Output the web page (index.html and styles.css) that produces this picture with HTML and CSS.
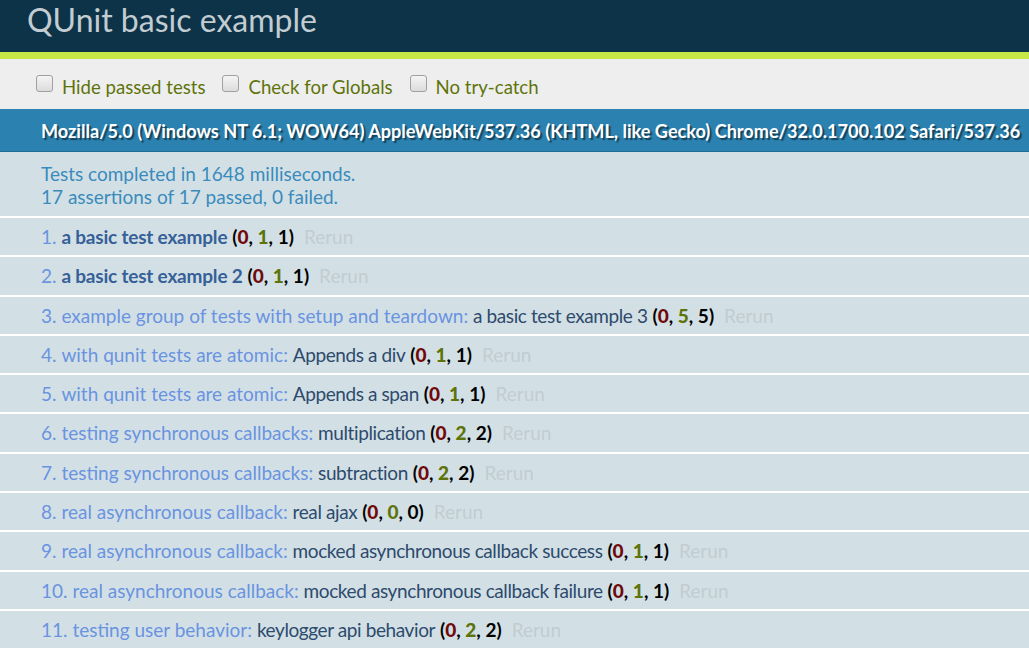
FILE: index.html
```html
<!DOCTYPE html>
<html>
<head>
  <meta charset="utf-8">
  <title>QUnit basic example</title>
  <link rel="stylesheet" href="styles.css">
</head>
<body>
  <h1 id="qunit-header"><a href="#">QUnit basic example</a></h1>
  <div id="qunit-banner"></div>
  <div id="qunit-testrunner-toolbar">
    <label><input type="checkbox"> Hide passed tests</label>
    <label><input type="checkbox"> Check for Globals</label>
    <label><input type="checkbox"> No try-catch</label>
  </div>
  <div id="qunit-userAgent">Mozilla/5.0 (Windows NT 6.1; WOW64) AppleWebKit/537.36 (KHTML, like Gecko) Chrome/32.0.1700.102 Safari/537.36</div>
  <p id="qunit-testresult">Tests completed in 1648 milliseconds.<br>17 assertions of 17 passed, 0 failed.</p>
  <ol id="qunit-tests">
    <li class="pass"><strong><span class="test-name">a basic test example</span> <b class="counts">(<b class="failed">0</b>, <b class="passed">1</b>, 1)</b></strong><a href="#">Rerun</a></li>
    <li class="pass"><strong><span class="test-name">a basic test example 2</span> <b class="counts">(<b class="failed">0</b>, <b class="passed">1</b>, 1)</b></strong><a href="#">Rerun</a></li>
    <li class="pass narrow"><strong><span class="module-name">example group of tests with setup and teardown</span>: <span class="test-name">a basic test example 3</span> <b class="counts">(<b class="failed">0</b>, <b class="passed">5</b>, 5)</b></strong><a href="#">Rerun</a></li>
    <li class="pass narrow"><strong><span class="module-name">with qunit tests are atomic</span>: <span class="test-name">Appends a div</span> <b class="counts">(<b class="failed">0</b>, <b class="passed">1</b>, 1)</b></strong><a href="#">Rerun</a></li>
    <li class="pass narrow"><strong><span class="module-name">with qunit tests are atomic</span>: <span class="test-name">Appends a span</span> <b class="counts">(<b class="failed">0</b>, <b class="passed">1</b>, 1)</b></strong><a href="#">Rerun</a></li>
    <li class="pass narrow"><strong><span class="module-name">testing synchronous callbacks</span>: <span class="test-name">multiplication</span> <b class="counts">(<b class="failed">0</b>, <b class="passed">2</b>, 2)</b></strong><a href="#">Rerun</a></li>
    <li class="pass narrow"><strong><span class="module-name">testing synchronous callbacks</span>: <span class="test-name">subtraction</span> <b class="counts">(<b class="failed">0</b>, <b class="passed">2</b>, 2)</b></strong><a href="#">Rerun</a></li>
    <li class="pass narrow"><strong><span class="module-name">real asynchronous callback</span>: <span class="test-name">real ajax</span> <b class="counts">(<b class="failed">0</b>, <b class="passed">0</b>, 0)</b></strong><a href="#">Rerun</a></li>
    <li class="pass narrow"><strong><span class="module-name">real asynchronous callback</span>: <span class="test-name">mocked asynchronous callback success</span> <b class="counts">(<b class="failed">0</b>, <b class="passed">1</b>, 1)</b></strong><a href="#">Rerun</a></li>
    <li class="pass narrow"><strong><span class="module-name">real asynchronous callback</span>: <span class="test-name">mocked asynchronous callback failure</span> <b class="counts">(<b class="failed">0</b>, <b class="passed">1</b>, 1)</b></strong><a href="#">Rerun</a></li>
    <li class="pass narrow"><strong><span class="module-name">testing user behavior</span>: <span class="test-name">keylogger api behavior</span> <b class="counts">(<b class="failed">0</b>, <b class="passed">2</b>, 2)</b></strong><a href="#">Rerun</a></li>
  </ol>
</body>
</html>
```

FILE: styles.css
```css
html {
  font-family: Lato, "Open Sans", sans-serif;
}

body {
  margin: 0;
  background-color: #fff;
}

/* header */

#qunit-header {
  margin: 0;
  height: 52px;
  padding-left: 27px;
  font-size: 32px;
  font-weight: normal;
  background-color: #0d3349;
}

#qunit-header a {
  display: inline-block;
  line-height: 31px;
  color: #c2ccd1;
  text-decoration: none;
}

#qunit-banner {
  height: 7px;
  background-color: #c6e746;
}

#qunit-testrunner-toolbar {
  display: flex;
  align-items: center;
  gap: 17px;
  height: 50px;
  box-sizing: border-box;
  padding: 6px 0 0 36px;
  font-size: 18.6px;
  color: #5e740b;
  background-color: #eee;
}

#qunit-testrunner-toolbar label {
  display: flex;
  align-items: center;
  gap: 9px;
}

#qunit-testrunner-toolbar input {
  appearance: none;
  width: 17px;
  height: 17px;
  margin: -7px 0 0 0;
  border: 1px solid #a0a0a0;
  border-radius: 3px;
  background: linear-gradient(#f4f4f4, #dcdcdc);
}

#qunit-userAgent {
  height: 42px;
  padding-left: 41px;
  line-height: 44px;
  font-size: 18.1px;
  font-weight: bold;
  color: #fff;
  background-color: #2b81af;
  text-shadow: rgba(0, 0, 0, 0.5) 2px 2px 1px;
  white-space: nowrap;
  overflow: hidden;
}

/* results */

#qunit-testresult {
  margin: 0;
  height: 67px;
  box-sizing: border-box;
  padding: 10px 0 0 41px;
  font-size: 19px;
  line-height: 23px;
  color: #3a8bbb;
  background-color: #d2e0e6;
  border-top: 1px solid #1f6d96;
  border-bottom: 2px solid #fff;
}

#qunit-tests {
  margin: 0;
  padding: 0;
  list-style-position: inside;
  font-size: 19px;
}

#qunit-tests li {
  height: 39.3px;
  box-sizing: border-box;
  padding-left: 41px;
  line-height: 37px;
  color: #6a93e0;
  background-color: #d2e0e6;
  border-bottom: 2px solid #fff;
  white-space: nowrap;
}

#qunit-tests strong {
  font-weight: normal;
}

#qunit-tests .test-name {
  font-weight: bold;
  color: #366097;
  letter-spacing: -0.2px;
}

#qunit-tests .narrow .test-name {
  font-weight: normal;
  color: #2e4a6c;
  letter-spacing: -0.4px;
}

#qunit-tests .counts {
  color: #000;
}

#qunit-tests .failed {
  color: #710909;
}

#qunit-tests .passed {
  color: #5e740b;
}

#qunit-tests li a {
  margin-left: 10px;
  color: #c2ccd1;
  text-decoration: none;
}
```
